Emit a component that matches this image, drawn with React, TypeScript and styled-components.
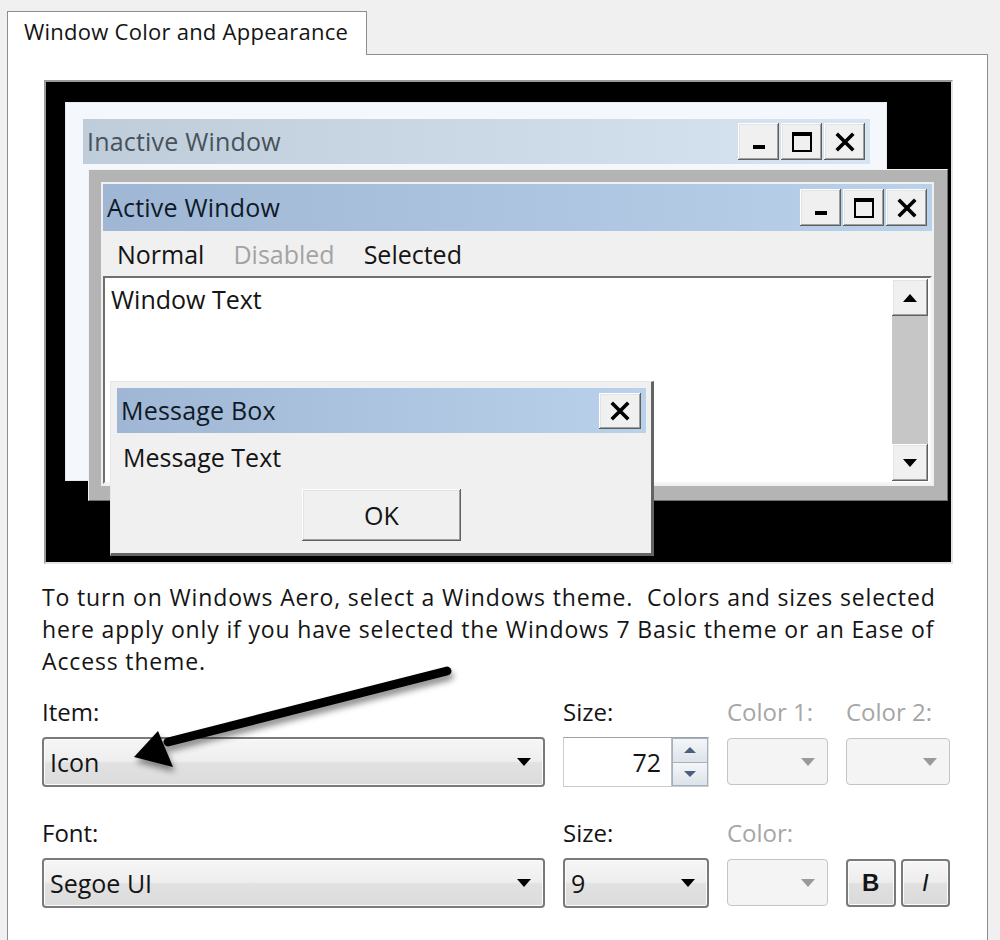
import React from "react"
import styled, { createGlobalStyle, css } from "styled-components"

const UI_FONT = `"Open Sans", "Noto Sans", "DejaVu Sans", sans-serif`

const GlobalStyle = createGlobalStyle`
  html, body {
    margin: 0;
    padding: 0;
    background: #f0f0f0;
  }
`

const Screen = styled.div`
  position: relative;
  width: 1000px;
  height: 940px;
  overflow: hidden;
  box-sizing: border-box;
  padding-left: 7px;
  display: flex;
  flex-direction: column;
  background: #f0f0f0;
  font-family: ${UI_FONT};
  font-size: 24px;
  color: #141414;
`

const TabStrip = styled.div`
  height: 54px;
  display: flex;
  align-items: flex-end;
`

const Tab = styled.div`
  position: relative;
  z-index: 1;
  width: 360px;
  height: 44px;
  margin-bottom: -1px;
  box-sizing: border-box;
  padding: 0 0 6px 16px;
  display: flex;
  align-items: center;
  background: #fff;
  border: 1px solid #8a8d92;
  border-bottom: none;
  font-size: 22px;
  letter-spacing: 0.25px;
  white-space: nowrap;
`

const Panel = styled.div`
  flex: 1;
  width: 981px;
  box-sizing: border-box;
  background: #fff;
  border: 1px solid #8a8d92;
  border-bottom: none;
`

/* ---------- preview ---------- */

const Preview = styled.div`
  position: relative;
  width: 909px;
  height: 484px;
  margin: 25px 0 0 36px;
  box-sizing: border-box;
  background: #000;
  border: 2px solid;
  border-color: #9a9a9a #e4e4e4 #e4e4e4 #9a9a9a;
  font-size: 25px;
`

const raised = css`
  background: #f0f0f0;
  box-shadow:
    inset -1px -1px 0 #5f5f5f,
    inset 1px 1px 0 #ffffff,
    inset -2px -2px 0 #a0a0a0,
    inset 2px 2px 0 #e3e3e3;
`

const InactiveWin = styled.div`
  position: absolute;
  left: 19px;
  top: 20px;
  width: 822px;
  height: 379px;
  box-sizing: border-box;
  padding: 16px 16px 0 17px;
  background: #f4f7fc;
  border: 1px solid #e6eaf0;
`

const ActiveWin = styled.div`
  position: absolute;
  left: 42px;
  top: 87px;
  width: 860px;
  height: 332px;
  box-sizing: border-box;
  padding: 12px 13px 14px 12px;
  background: #b4b4b4;
  border: 1px solid;
  border-color: #f2f2f2 #6e6e6e #6e6e6e #f2f2f2;
`

const ActiveInner = styled.div`
  height: 100%;
  box-sizing: border-box;
  display: flex;
  flex-direction: column;
  border: 2px solid #f0f0f0;
  background: #f0f0f0;
`

const TitleBar = styled.div<{ $active?: boolean; $h?: number }>`
  flex: 0 0 auto;
  height: ${(p) => p.$h ?? 45}px;
  box-sizing: border-box;
  padding: 0 5px 0 4px;
  display: flex;
  align-items: center;
  justify-content: space-between;
  background: ${(p) =>
    p.$active
      ? "linear-gradient(90deg, #9fb7d4 0%, #b9d1ea 100%)"
      : "linear-gradient(90deg, #bfcddb 0%, #d7e4f2 100%)"};
`

const Caption = styled.span<{ $active?: boolean }>`
  padding-bottom: 2px;
  letter-spacing: 0.2px;
  color: ${(p) => (p.$active ? "#0f1a28" : "#47525a")};
  white-space: nowrap;
`

const CapButtons = styled.div`
  display: flex;
  gap: 2px;
`

const CapButton = styled.div<{ $w?: number }>`
  ${raised};
  width: ${(p) => p.$w ?? 41}px;
  height: 37px;
  display: flex;
  align-items: center;
  justify-content: center;
`

const MinGlyph = () => (
  <svg width="16" height="16" viewBox="0 0 16 16">
    <rect x="2" y="11" width="12" height="4" fill="#000" />
  </svg>
)

const MaxGlyph = () => (
  <svg width="20" height="20" viewBox="0 0 20 20">
    <rect x="1" y="1" width="18" height="18" fill="none" stroke="#000" strokeWidth="2" />
    <rect x="1" y="1" width="18" height="3" fill="#000" />
  </svg>
)

const CloseGlyph = () => (
  <svg width="20" height="20" viewBox="0 0 20 20">
    <path d="M3 3 L17 17 M17 3 L3 17" stroke="#000" strokeWidth="3.6" strokeLinecap="square" />
  </svg>
)

const CaptionButtons = () => (
  <CapButtons>
    <CapButton>
      <MinGlyph />
    </CapButton>
    <CapButton>
      <MaxGlyph />
    </CapButton>
    <CapButton>
      <CloseGlyph />
    </CapButton>
  </CapButtons>
)

const MenuBar = styled.div`
  flex: 0 0 45px;
  display: flex;
  align-items: center;
  gap: 29px;
  padding-left: 14px;
  background: #f0f0f0;
`

const MenuItem = styled.span<{ $disabled?: boolean }>`
  color: ${(p) => (p.$disabled ? "#a3a3a3" : "#141414")};
`

const Client = styled.div`
  flex: 1;
  display: flex;
  justify-content: space-between;
  box-sizing: border-box;
  background: #fff;
  border: 2px solid;
  border-color: #6f6f6f #f4f4f4 #f4f4f4 #6f6f6f;
  padding: 1px 2px 1px 6px;
`

const ClientText = styled.div`
  padding-top: 3px;
`

const ScrollBar = styled.div`
  width: 36px;
  display: flex;
  flex-direction: column;
`

const ScrollBtn = styled.div`
  ${raised};
  height: 37px;
  display: flex;
  align-items: center;
  justify-content: center;
`

const ScrollTrack = styled.div`
  flex: 1;
  background: #c6c6c6;
`

const Tri = ({ up, color = "#000", w = 14, h = 8 }: { up?: boolean; color?: string; w?: number; h?: number }) => (
  <svg width={w} height={h} viewBox={`0 0 ${w} ${h}`}>
    <polygon points={up ? `0,${h} ${w},${h} ${w / 2},0` : `0,0 ${w},0 ${w / 2},${h}`} fill={color} />
  </svg>
)

const MessageBox = styled.div`
  position: absolute;
  left: 64px;
  top: 299px;
  width: 544px;
  height: 175px;
  box-sizing: border-box;
  padding: 6px 5px 0 6px;
  display: flex;
  flex-direction: column;
  background: #f0f0f0;
  border: 1px solid;
  border-right-width: 3px;
  border-bottom-width: 3px;
  border-color: #e8e8e8 #646464 #646464 #e8e8e8;
`

const MessageText = styled.div`
  height: 47px;
  display: flex;
  align-items: center;
  padding-left: 6px;
`

const OkButton = styled.div`
  ${raised};
  align-self: center;
  margin-top: 9px;
  width: 159px;
  height: 52px;
  display: flex;
  align-items: center;
  justify-content: center;
`

const SmallCapButton = styled(CapButton)`
  height: 36px;
`

/* ---------- controls ---------- */

const Hint = styled.p`
  width: 925px;
  margin: 17px 0 0 34px;
  line-height: 32px;
  font-size: 23px;
  letter-spacing: 0.85px;
`

const FieldGrid = styled.div`
  display: grid;
  grid-template-columns: 503px 146px 101px 104px;
  column-gap: 18px;
  row-gap: 33px;
  margin: 22px 0 0 34px;
`

const Field = styled.div`
  display: flex;
  flex-direction: column;
  gap: 12px;
`

const Label = styled.div<{ $disabled?: boolean }>`
  height: 26px;
  line-height: 26px;
  white-space: nowrap;
  color: ${(p) => (p.$disabled ? "#a6a6a6" : "#141414")};
`

const Combo = styled.div<{ $disabled?: boolean }>`
  height: 50px;
  box-sizing: border-box;
  display: flex;
  align-items: center;
  justify-content: space-between;
  padding: 0 12px 0 6px;
  border-radius: 4px;
  font-size: 25px;
  ${(p) =>
    p.$disabled
      ? css`
          height: 47px;
          margin-top: 1px;
          border: 1px solid #c4c4c4;
          background: #f4f4f4;
        `
      : css`
          border: 2px solid #7a7a7a;
          background: linear-gradient(180deg, #f6f6f6 0%, #eeeeee 48%, #e1e1e1 52%, #dcdcdc 100%);
          box-shadow: inset 0 0 0 1px #fbfbfb;
        `}
`

const Spinner = styled.div`
  height: 50px;
  box-sizing: border-box;
  display: flex;
  background: #fff;
  border: 1px solid;
  border-color: #9ea3ab #dfe3e8 #c9cdd2 #c9cdd2;
  font-size: 25px;
`

const SpinValue = styled.div`
  flex: 1;
  display: flex;
  align-items: center;
  justify-content: flex-end;
  padding-right: 10px;
`

const SpinButtons = styled.div`
  width: 36px;
  display: flex;
  flex-direction: column;
  border-left: 1px solid #b8bec6;
`

const SpinBtn = styled.div`
  flex: 1;
  display: flex;
  align-items: center;
  justify-content: center;
  background: linear-gradient(180deg, #f4f6f8, #dde3ea);
  border: 1px solid #a5b0bd;
  & + & {
    border-top: none;
  }
`

const StyleButtons = styled.div`
  display: flex;
  gap: 5px;
`

const StyleButton = styled.div<{ $italic?: boolean }>`
  width: 50px;
  height: 48px;
  margin-top: 1px;
  box-sizing: border-box;
  display: flex;
  align-items: center;
  justify-content: center;
  border: 2px solid #7a7a7a;
  border-radius: 4px;
  background: linear-gradient(180deg, #f6f6f6 0%, #ededed 48%, #e0e0e0 52%, #dadada 100%);
  box-shadow: inset 0 0 0 1px #fbfbfb;
  font-family: "Liberation Sans", Arial, sans-serif;
  font-size: 24px;
  font-weight: ${(p) => (p.$italic ? 400 : 700)};
  font-style: ${(p) => (p.$italic ? "italic" : "normal")};
`

const Overlay = styled.svg`
  position: absolute;
  left: 0;
  top: 0;
  pointer-events: none;
`

const PointerArrow = () => (
  <Overlay width="1000" height="940" viewBox="0 0 1000 940">
    <defs>
      <filter id="sh" x="-10%" y="-10%" width="130%" height="140%">
        <feDropShadow dx="2" dy="5" stdDeviation="3" floodColor="#000" floodOpacity="0.45" />
      </filter>
    </defs>
    <g filter="url(#sh)">
      <path d="M 447 671 L 168 742" stroke="#050505" strokeWidth="9" strokeLinecap="round" />
      <polygon points="134,757 158,731 173,767" fill="#050505" />
    </g>
  </Overlay>
)

export default function App() {
  return (
    <>
      <GlobalStyle />
      <Screen>
        <TabStrip>
          <Tab>Window Color and Appearance</Tab>
        </TabStrip>
        <Panel>
          <Preview>
            <InactiveWin>
              <TitleBar>
                <Caption>Inactive Window</Caption>
                <CaptionButtons />
              </TitleBar>
            </InactiveWin>
            <ActiveWin>
              <ActiveInner>
                <TitleBar $active $h={47}>
                  <Caption $active>Active Window</Caption>
                  <CaptionButtons />
                </TitleBar>
                <MenuBar>
                  <MenuItem>Normal</MenuItem>
                  <MenuItem $disabled>Disabled</MenuItem>
                  <MenuItem>Selected</MenuItem>
                </MenuBar>
                <Client>
                  <ClientText>Window Text</ClientText>
                  <ScrollBar>
                    <ScrollBtn>
                      <Tri up />
                    </ScrollBtn>
                    <ScrollTrack />
                    <ScrollBtn>
                      <Tri />
                    </ScrollBtn>
                  </ScrollBar>
                </Client>
              </ActiveInner>
            </ActiveWin>
            <MessageBox>
              <TitleBar $active $h={45}>
                <Caption $active>Message Box</Caption>
                <SmallCapButton $w={42}>
                  <CloseGlyph />
                </SmallCapButton>
              </TitleBar>
              <MessageText>Message Text</MessageText>
              <OkButton>OK</OkButton>
            </MessageBox>
          </Preview>

          <Hint>
            To turn on Windows Aero, select a Windows theme.&nbsp; Colors and sizes selected here apply only
            if you have selected the Windows 7 Basic theme or an Ease of Access theme.
          </Hint>

          <FieldGrid>
            <Field>
              <Label>Item:</Label>
              <Combo>
                <span>Icon</span>
                <Tri />
              </Combo>
            </Field>
            <Field>
              <Label>Size:</Label>
              <Spinner>
                <SpinValue>72</SpinValue>
                <SpinButtons>
                  <SpinBtn>
                    <Tri up color="#4a5f7e" w={12} h={6} />
                  </SpinBtn>
                  <SpinBtn>
                    <Tri color="#4a5f7e" w={12} h={6} />
                  </SpinBtn>
                </SpinButtons>
              </Spinner>
            </Field>
            <Field>
              <Label $disabled>Color 1:</Label>
              <Combo $disabled>
                <span />
                <Tri color="#9a9a9a" />
              </Combo>
            </Field>
            <Field>
              <Label $disabled>Color 2:</Label>
              <Combo $disabled>
                <span />
                <Tri color="#9a9a9a" />
              </Combo>
            </Field>

            <Field>
              <Label>Font:</Label>
              <Combo>
                <span>Segoe UI</span>
                <Tri />
              </Combo>
            </Field>
            <Field>
              <Label>Size:</Label>
              <Combo>
                <span>9</span>
                <Tri />
              </Combo>
            </Field>
            <Field>
              <Label $disabled>Color:</Label>
              <Combo $disabled>
                <span />
                <Tri color="#9a9a9a" />
              </Combo>
            </Field>
            <Field>
              <Label>&nbsp;</Label>
              <StyleButtons>
                <StyleButton>B</StyleButton>
                <StyleButton $italic>I</StyleButton>
              </StyleButtons>
            </Field>
          </FieldGrid>
        </Panel>
        <PointerArrow />
      </Screen>
    </>
  )
}
